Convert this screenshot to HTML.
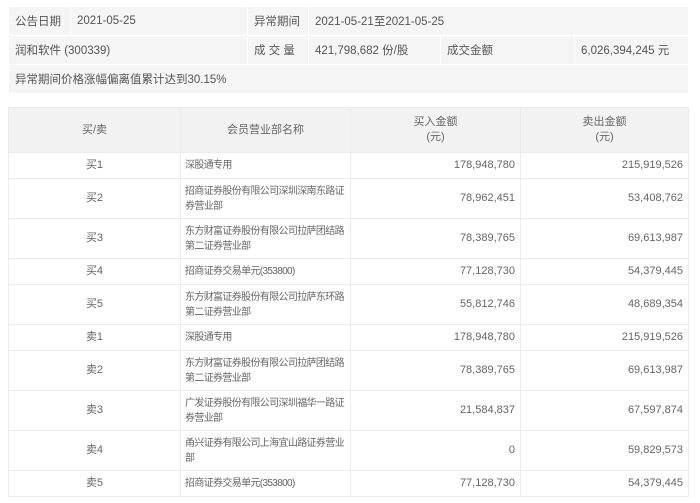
<!DOCTYPE html>
<html><head><meta charset="utf-8"><style>
body{margin:0;background:#fff;width:700px;height:503px;overflow:hidden;font-family:"Liberation Sans","Noto Sans CJK SC",sans-serif;font-size:11px;color:#666}
table{position:absolute;left:8px;border-collapse:collapse;table-layout:fixed}
#t1{top:6px;width:680px;background:#f5f5f5;color:#555}
#t1 td{border:1px solid #fff;padding:0 0 0 6px;height:28px;font-size:11.5px}
#t2{top:107px;width:680px}
#t2 td,#t2 th{border:1px solid #ececec;padding:0 5px;font-weight:normal;line-height:15px}
#t2 th{background:#f2f2f2;height:44px;text-align:center}
#t2 td.c{text-align:center}
#t2 td.r{text-align:right}
#t2 td.n{font-size:10px;letter-spacing:-0.65px;padding:0 1px 0 4px}
tr.s td{height:25px}
tr.d td{height:39px}
</style></head><body>
<table id="t1">
<colgroup><col style="width:62px"><col style="width:177px"><col style="width:61px"><col style="width:132px"><col style="width:134px"><col style="width:114px"></colgroup>
<tr><td>公告日期</td><td>2021-05-25</td><td>异常期间</td><td colspan="3">2021-05-21至2021-05-25</td></tr>
<tr><td colspan="2">润和软件 (300339)</td><td>成 交 量</td><td>421,798,682 份/股</td><td>成交金额</td><td>6,026,394,245 元</td></tr>
<tr><td colspan="6">异常期间价格涨幅偏离值累计达到30.15%</td></tr>
</table>
<table id="t2">
<colgroup><col style="width:172px"><col style="width:170px"><col style="width:170px"><col style="width:168px"></colgroup>
<tr><th>买/卖</th><th>会员营业部名称</th><th>买入金额<br>(元)</th><th>卖出金额<br>(元)</th></tr>
<tr class="s"><td class="c">买1</td><td class="n">深股通专用</td><td class="r">178,948,780</td><td class="r">215,919,526</td></tr>
<tr class="d"><td class="c">买2</td><td class="n">招商证券股份有限公司深圳深南东路证券营业部</td><td class="r">78,962,451</td><td class="r">53,408,762</td></tr>
<tr class="d"><td class="c">买3</td><td class="n">东方财富证券股份有限公司拉萨团结路第二证券营业部</td><td class="r">78,389,765</td><td class="r">69,613,987</td></tr>
<tr class="s"><td class="c">买4</td><td class="n">招商证券交易单元(353800)</td><td class="r">77,128,730</td><td class="r">54,379,445</td></tr>
<tr class="d"><td class="c">买5</td><td class="n">东方财富证券股份有限公司拉萨东环路第二证券营业部</td><td class="r">55,812,746</td><td class="r">48,689,354</td></tr>
<tr class="s"><td class="c">卖1</td><td class="n">深股通专用</td><td class="r">178,948,780</td><td class="r">215,919,526</td></tr>
<tr class="d"><td class="c">卖2</td><td class="n">东方财富证券股份有限公司拉萨团结路第二证券营业部</td><td class="r">78,389,765</td><td class="r">69,613,987</td></tr>
<tr class="d"><td class="c">卖3</td><td class="n">广发证券股份有限公司深圳福华一路证券营业部</td><td class="r">21,584,837</td><td class="r">67,597,874</td></tr>
<tr class="d"><td class="c">卖4</td><td class="n">甬兴证券有限公司上海宜山路证券营业部</td><td class="r">0</td><td class="r">59,829,573</td></tr>
<tr class="s"><td class="c">卖5</td><td class="n">招商证券交易单元(353800)</td><td class="r">77,128,730</td><td class="r">54,379,445</td></tr>
</table>
</body></html>
